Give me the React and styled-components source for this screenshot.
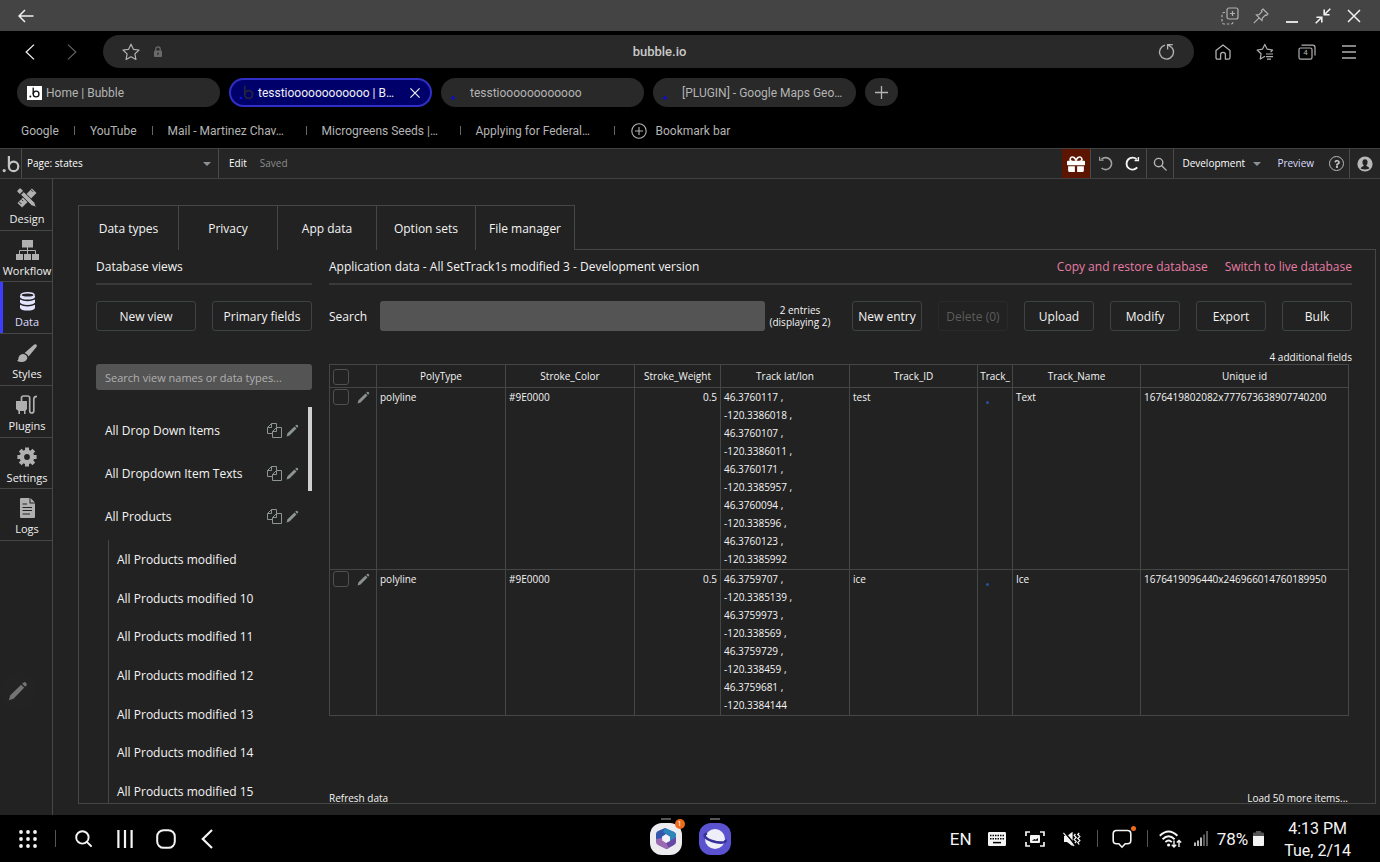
import React from "react";
import styled, { createGlobalStyle, css } from "styled-components";
import { FaGift, FaQuestion } from "react-icons/fa";

const sideItems = [
  { label: "Design", icon: "design" },
  { label: "Workflow", icon: "workflow" },
  { label: "Data", icon: "data", active: true },
  { label: "Styles", icon: "styles" },
  { label: "Plugins", icon: "plugins" },
  { label: "Settings", icon: "settings" },
  { label: "Logs", icon: "logs" },
];

const dataTabs = ["Data types", "Privacy", "App data", "Option sets", "File manager"];
const views = ["All Drop Down Items", "All Dropdown Item Texts", "All Products"];
const subViews = [
  "All Products modified",
  "All Products modified 10",
  "All Products modified 11",
  "All Products modified 12",
  "All Products modified 13",
  "All Products modified 14",
  "All Products modified 15",
];

const columns = [
  { name: "", width: 47 },
  { name: "PolyType", width: 129 },
  { name: "Stroke_Color", width: 129 },
  { name: "Stroke_Weight", width: 86 },
  { name: "Track lat/lon", width: 129 },
  { name: "Track_ID", width: 128 },
  { name: "Track_", width: 35 },
  { name: "Track_Name", width: 128 },
  { name: "Unique id", width: 208 },
];

const rows = [
  {
    points: ["46.3760117 ,", "-120.3386018 ,", "46.3760107 ,", "-120.3386011 ,", "46.3760171 ,", "-120.3385957 ,", "46.3760094 ,", "-120.338596 ,", "46.3760123 ,", "-120.3385992"],
    trackId: "test",
    trackName: "Text",
    uid: "1676419802082x777673638907740200",
  },
  {
    points: ["46.3759707 ,", "-120.3385139 ,", "46.3759973 ,", "-120.338569 ,", "46.3759729 ,", "-120.338459 ,", "46.3759681 ,", "-120.3384144"],
    trackId: "ice",
    trackName: "Ice",
    uid: "1676419096440x246966014760189950",
  },
];

const Icon = ({ size = 20, width, height, box = "0 0 24 24", stroke = 1.5, children }) => (
  <svg
    width={width || size}
    height={height || size}
    viewBox={box}
    fill="none"
    stroke="currentColor"
    strokeWidth={stroke}
    aria-hidden="true"
  >
    {children}
  </svg>
);

const BubbleMark = ({ size = 18, dot = "currentColor" }) => (
  <Icon size={size} box="0 0 18 18" stroke={2.2}>
    <circle cx="11.6" cy="11.4" r="4.7" />
    <rect x="5.8" y="1" width="2.2" height="10.5" fill="currentColor" stroke="none" />
    <circle cx="2.2" cy="15.6" r="1.6" fill={dot} stroke="none" />
  </Icon>
);

const Pencil = ({ size = 14 }) => (
  <Icon size={size} box="0 0 14 14">
    <path d="M.6 13.4 L1.6 10 L9.2 2.7 L11.3 4.8 L3.8 12.4 Z M9.9 2 L11 1 Q11.7 .5 12.3 1.1 L12.9 1.7 Q13.5 2.3 13 3 L12 4.1 Z" fill="currentColor" stroke="none" />
  </Icon>
);

const CopyIcon = () => (
  <Icon width={15} height={15} box="0 0 15 15" stroke={1}>
    <path d="M5.5 10.5 H.5 V4.5 L4.5 .5 H9.5 V4" />
    <path d="M4.5 .5 V4.5 H.5" />
    <path d="M9.5 4.5 H14.5 V14.5 H5.5 V8.5 Z" />
    <path d="M9.5 4.5 V8.5 H5.5" />
  </Icon>
);

const SideIcon = ({ name }) => {
  if (name === "workflow") {
    return (
      <Icon width={23} height={20} box="0 0 23 20" stroke={1}>
        <path d="M6 0 H17 V7.5 H6 Z M0 14 H7 V20 H0 Z M8 14 H15 V20 H8 Z M16 14 H23 V20 H16 Z" fill="currentColor" stroke="none" />
        <path d="M11.5 7 V14 M3.5 14 V10.5 H19.5 V14" />
      </Icon>
    );
  }
  if (name === "data") {
    return (
      <Icon width={15} height={19} box="0 0 15 19">
        <ellipse cx="7.5" cy="3" rx="6.6" ry="2.3" strokeWidth="1.4" />
        <path d="M0 3.4 Q7.5 8 15 3.4 V5.2 Q13.6 7.6 7.5 7.6 Q1.4 7.6 0 5.2 Z" fill="currentColor" stroke="none" />
        <path d="M0 7.4 Q3 9.2 7.5 9.2 Q12 9.2 15 7.4 V10.6 Q13.6 13 7.5 13 Q1.4 13 0 10.6 Z" fill="currentColor" stroke="none" />
        <path d="M0 12.8 Q3 14.6 7.5 14.6 Q12 14.6 15 12.8 V16 Q13.6 18.6 7.5 18.6 Q1.4 18.6 0 16 Z" fill="currentColor" stroke="none" />
      </Icon>
    );
  }
  if (name === "styles") {
    return (
      <Icon width={20} height={19} box="0 0 20 19">
        <path d="M7.6 9 L17.2 .6 Q18.6 -.2 19.6 .8 Q20.2 1.8 19.4 3 L11.6 12.4 Q10.4 9.8 7.6 9 Z" fill="currentColor" stroke="none" />
        <path d="M6.4 10 Q9.8 10.6 10.4 14 Q9.4 17.4 5.6 18 Q2.4 18.4 0 16.8 Q1.6 16.2 1.6 13.6 Q2.4 10 6.4 10 Z" fill="currentColor" stroke="none" />
      </Icon>
    );
  }
  if (name === "settings") {
    return (
      <Icon size={20} box="0 0 20 20" stroke={4}>
        <path d="M10 .4 V4 M10 16 V19.6 M.4 10 H4 M16 10 H19.6 M3.2 3.2 L5.8 5.8 M14.2 14.2 L16.8 16.8 M3.2 16.8 L5.8 14.2 M14.2 5.8 L16.8 3.2" />
        <circle cx="10" cy="10" r="5.1" strokeWidth="4.4" />
      </Icon>
    );
  }
  if (name === "design") {
    return (
      <Icon size={20} box="0 0 20 20">
        <g fill="currentColor" stroke="none">
          <path d="M14.9 .5 L19.5 5.1 L5.1 19.5 L.5 14.9 Z" />
          <path d="M3.6 .5 L6 2.8 L2.8 6 L.5 3.7 Q0 3.2 .5 2.6 L2.6 .5 Q3.1 0 3.6 .5 Z" />
        </g>
        <path d="M6.8 3.6 L17.7 14.5 L19.4 19.3 L14.6 17.7 L3.6 6.8 Z" fill="currentColor" stroke="#222222" strokeWidth="1" />
        <path d="M14 1.7 L16 3.7 M2.2 13.8 L4.4 16 M4.6 11.5 L6.2 13.1" stroke="#222222" strokeWidth="1" />
      </Icon>
    );
  }
  if (name === "plugins") {
    return (
      <Icon width={22} height={20} box="0 0 22 20" stroke={1.7}>
        <path d="M0 6 H11 V14 L9.5 16 V19 H8 V16 H4 V19 H2.4 V16 L0 14 Z" fill="currentColor" stroke="none" />
        <path d="M5.5 6 V3 Q5.5 1 7.5 1 H11.5 Q13.7 1 13.7 3 V15.5 Q13.7 18 15.7 18 Q17.8 18 17.8 15.5 V4 Q17.8 1.3 21 1.3" />
      </Icon>
    );
  }
  return (
    <Icon width={15} height={20} box="0 0 15 20">
      <path d="M1 0 H9.5 V5.5 H15 V19 Q15 20 14 20 H1 Q0 20 0 19 V1 Q0 0 1 0 Z M10.5 0 L15 4.5 H10.5 Z" fill="currentColor" stroke="none" />
      <path d="M2.5 6 H7 M2.5 9.5 H12 M2.5 12.5 H12 M2.5 16 H10" stroke="#222222" strokeWidth="1" />
    </Icon>
  );
};

const Browser = () => (
  <BrowserChrome>
    <TitleBar>
      <ChromeButton $w={31} $bright aria-label="Close app">
        <Icon size={16} box="0 0 16 16">
          <path d="M15.5 8 H1.2 M7 2 L1 8 L7 14" />
        </Icon>
      </ChromeButton>
      <Spacer />
      <ChromeButton $w={31} aria-label="Pop out">
        <Icon size={18} box="0 0 18 18" stroke={1.2}>
          <rect x="6" y="1" width="11" height="11" rx="2" />
          <path d="M11.5 4 V9 M9 6.5 H14" />
          <path d="M4 5.5 H3 Q1 5.5 1 8 V15 Q1 17 3 17 H10 Q12 17 12 15 V13.5" strokeDasharray="2.5 1.8" />
        </Icon>
      </ChromeButton>
      <ChromeButton $w={31} aria-label="Pin">
        <Icon size={16} box="0 0 16 16" stroke={1.2}>
          <path d="M10 1 L15 6 L13.4 7.6 L12.4 7 L9.4 10 L9 12.6 L3.4 7 L6 6.6 L9 3.6 L8.4 2.6 Z M5.8 10.2 L.8 15.2" />
        </Icon>
      </ChromeButton>
      <ChromeButton $w={31} $bright aria-label="Minimize">
        <Icon size={16} box="0 0 16 16" stroke={1.8}>
          <path d="M2 14 H14" />
        </Icon>
      </ChromeButton>
      <ChromeButton $w={31} $bright aria-label="Restore">
        <Icon size={16} box="0 0 16 16" stroke={1.6}>
          <path d="M15.3 .7 L9.3 6.7 M9.2 1.5 V6.8 H14.6 M.7 15.3 L6.7 9.3 M1.4 9.2 H6.8 V14.5" />
        </Icon>
      </ChromeButton>
      <ChromeButton $w={31} $bright aria-label="Close">
        <Icon size={14} box="0 0 14 14" stroke={1.5}>
          <path d="M1 1 L13 13 M13 1 L1 13" />
        </Icon>
      </ChromeButton>
    </TitleBar>

    <AddressRow>
      <ChromeButton $w={42} $bright aria-label="Back">
        <Icon width={10} height={16} box="0 0 10 16" stroke={1.3}>
          <path d="M9 .6 L1.2 8 L9 15.4" />
        </Icon>
      </ChromeButton>
      <ChromeButton $w={42} $dim aria-label="Forward">
        <Icon width={10} height={16} box="0 0 10 16" stroke={1.3}>
          <path d="M1 .6 L8.8 8 L1 15.4" />
        </Icon>
      </ChromeButton>
      <AddressPill>
        <Icon size={18} box="0 0 18 18" stroke={1.2}>
          <path d="M9 1.2 L11.4 6.3 L17 7 L12.9 10.9 L13.9 16.5 L9 13.8 L4.1 16.5 L5.1 10.9 L1 7 L6.6 6.3 Z" strokeLinejoin="round" />
        </Icon>
        <LockIcon>
          <Icon width={8} height={11} box="0 0 8 11" stroke={1.2}>
            <path d="M1.8 5 V3 Q1.8 .9 4 .9 Q6.2 .9 6.2 3 V5" />
            <rect x="0" y="4.4" width="8" height="6.6" rx="1" fill="currentColor" stroke="none" />
            <path d="M4 6.5 V9" stroke="#292929" />
          </Icon>
        </LockIcon>
        <Url>bubble.io</Url>
        <Icon size={18} box="0 0 18 18" stroke={1.3}>
          <path d="M14.6 4.2 A7 7 0 1 1 8 2.2" />
          <path d="M15.8 1.6 H10.6 V6.6 M10.8 1.8 L14.6 4.4" />
        </Icon>
      </AddressPill>
      <ChromeButton $w={42} aria-label="Home">
        <Icon size={16} box="0 0 16 16" stroke={1.3}>
          <path d="M5.6 15.2 H2.6 Q1 15.2 1 13.6 V6.4 L8 .9 L15 6.4 V13.6 Q15 15.2 13.4 15.2 H10.4 V10.6 Q10.4 8.4 8 8.4 Q5.6 8.4 5.6 10.6 Z" strokeLinejoin="round" />
        </Icon>
      </ChromeButton>
      <ChromeButton $w={42} aria-label="Bookmarks">
        <Icon size={18} box="0 0 18 18" stroke={1.2}>
          <path d="M9 13.2 L4.2 16 L5.1 10.8 L1.2 7 L6.4 6.2 L8.8 1.4 L11.2 6.2 L16.6 7 L14.6 9" strokeLinejoin="round" />
          <path d="M10 11 H17 M10 13.6 H17 M11 16.2 H15" />
        </Icon>
      </ChromeButton>
      <ChromeButton $w={42} aria-label="Tabs">
        <TabCount>
          <Icon width={18} height={16} box="0 0 18 16" stroke={1.2}>
            <rect x="1" y="4" width="13" height="11.2" rx="1.6" />
            <path d="M3.5 1.2 H14.6 Q17 1.2 17 3.4 V11.5" />
          </Icon>
          <span>4</span>
        </TabCount>
      </ChromeButton>
      <ChromeButton $w={42} aria-label="Menu">
        <Icon size={14} box="0 0 14 14" stroke={1.3}>
          <path d="M0 1 H14 M0 7 H14 M0 13 H14" />
        </Icon>
      </ChromeButton>
    </AddressRow>

    <TabRow>
      <BrowserTab>
        <Favicon>
          <BubbleMark size={11} />
        </Favicon>
        <span>Home | Bubble</span>
      </BrowserTab>
      <BrowserTab $active>
        <DarkMark>
          <BubbleMark size={15} dot="#1010d8" />
        </DarkMark>
        <span>tesstioooooooooooo | B…</span>
        <Spacer />
        <Icon size={10} box="0 0 10 10" stroke={1.2}>
          <path d="M.4 .4 L9.6 9.6 M9.6 .4 L.4 9.6" />
        </Icon>
      </BrowserTab>
      <BrowserTab>
        <LoadingDot />
        <span>tesstioooooooooooo</span>
      </BrowserTab>
      <BrowserTab>
        <LoadingDot />
        <span>[PLUGIN] - Google Maps Geo…</span>
      </BrowserTab>
      <NewTab aria-label="New tab">
        <Icon size={13} box="0 0 13 13" stroke={1.3}>
          <path d="M6.5 0 V13 M0 6.5 H13" />
        </Icon>
      </NewTab>
    </TabRow>

    <BookmarkRow>
      <Bookmark href="#">Google</Bookmark>
      <Bookmark href="#">YouTube</Bookmark>
      <Bookmark href="#" $long>Mail - Martinez Chav…</Bookmark>
      <Bookmark href="#" $long>Microgreens Seeds |…</Bookmark>
      <Bookmark href="#" $long>Applying for Federal…</Bookmark>
      <AddBookmark>
        <Icon size={16} box="0 0 16 16" stroke={1.1}>
          <circle cx="8" cy="8" r="7.2" />
          <path d="M8 4 V12 M4 8 H12" />
        </Icon>
        Bookmark bar
      </AddBookmark>
    </BookmarkRow>
  </BrowserChrome>
);

const EditorBar = () => (
  <TopBar>
    <LogoCell>
      <BubbleMark size={18} />
    </LogoCell>
    <PageCell>
      <BarSelect aria-label="Page">
        <option>Page: states</option>
      </BarSelect>
      <Caret />
    </PageCell>
    <BarText>Edit</BarText>
    <SavedText>Saved</SavedText>
    <Spacer />
    <GiftButton aria-label="Gift">
      <FaGift size={18} />
    </GiftButton>
    <HistoryCell>
      <IconButton aria-label="Undo">
        <Icon size={15} box="0 0 15 15" stroke={1.6}>
          <path d="M3.5 3.2 A6 6 0 1 1 3.5 12" />
          <path d="M1.6 .8 V4.2 H5.6" strokeWidth="1.2" />
        </Icon>
      </IconButton>
      <IconButton $bright aria-label="Redo">
        <Icon size={15} box="0 0 15 15" stroke={1.9}>
          <path d="M11.8 3.4 A6 6 0 1 0 12.2 11.4" />
          <path d="M13.4 1 V4.5 H9.6" strokeWidth="1.4" />
        </Icon>
      </IconButton>
    </HistoryCell>
    <SearchCell aria-label="Search">
      <Icon size={14} box="0 0 16 16" stroke={1.6}>
        <circle cx="6.4" cy="6.4" r="4.8" />
        <path d="M10 10 L15 15" strokeLinecap="round" />
      </Icon>
    </SearchCell>
    <DevSelect aria-label="Version">
      <option>Development</option>
    </DevSelect>
    <Caret />
    <PreviewLink href="#">Preview</PreviewLink>
    <HelpCircle aria-label="Help">
      <FaQuestion size={8} />
    </HelpCircle>
    <UserCell aria-label="Account">
      <Icon size={16} box="0 0 16 16">
        <circle cx="8" cy="8" r="7.6" fill="currentColor" stroke="none" />
        <path d="M3.6 12.4 Q4 10.6 6.6 10 V9 Q5.2 7.6 5.4 5.4 Q5.8 3.2 8 3.2 Q10.2 3.2 10.6 5.4 Q10.8 7.6 9.4 9 V10 Q12 10.6 12.4 12.4 Q8 14.4 3.6 12.4 Z" fill="#222222" stroke="none" />
      </Icon>
    </UserCell>
  </TopBar>
);

const ViewsPane = () => (
  <ViewsColumn>
    <Heading>Database views</Heading>
    <ViewButtons>
      <OutlineButton>New view</OutlineButton>
      <OutlineButton>Primary fields</OutlineButton>
    </ViewButtons>
    <ViewSearch aria-label="Search views" placeholder="Search view names or data types..." />
    <ViewList>
      <ScrollThumb />
      {views.map((view) => (
        <ViewRow key={view}>
          <span>{view}</span>
          <Spacer />
          <CopyIcon />
          <Pencil size={13} />
        </ViewRow>
      ))}
      <SubList>
        {subViews.map((view) => (
          <SubRow key={view}>{view}</SubRow>
        ))}
      </SubList>
    </ViewList>
  </ViewsColumn>
);

const DataPane = () => (
  <DataColumn>
    <Heading>
      <span>Application data - All SetTrack1s modified 3 - Development version</span>
      <Spacer />
      <PinkLink href="#">Copy and restore database</PinkLink>
      <PinkLink href="#">Switch to live database</PinkLink>
    </Heading>
    <Controls>
      <SearchLabel htmlFor="search">Search</SearchLabel>
      <SearchInput id="search" />
      <Entries>
        2 entries
        <br />
        (displaying 2)
      </Entries>
      <Actions>
        <OutlineButton>New entry</OutlineButton>
        <OutlineButton disabled>Delete (0)</OutlineButton>
        <OutlineButton>Upload</OutlineButton>
        <OutlineButton>Modify</OutlineButton>
        <OutlineButton>Export</OutlineButton>
        <OutlineButton>Bulk</OutlineButton>
      </Actions>
    </Controls>
    <Additional>4 additional fields</Additional>
    <Table>
      <colgroup>
        {columns.map((col) => (
          <Col key={col.name} $w={col.width} />
        ))}
      </colgroup>
      <thead>
        <tr>
          {columns.map((col) =>
            col.name ? (
              <Th key={col.name}>{col.name}</Th>
            ) : (
              <Th key="check">
                <RowTools>
                  <CheckBox type="checkbox" aria-label="Select all" />
                </RowTools>
              </Th>
            )
          )}
        </tr>
      </thead>
      <tbody>
        {rows.map((row) => (
          <tr key={row.uid}>
            <Td>
              <RowTools>
                <CheckBox type="checkbox" aria-label={`Select ${row.trackName}`} />
                <Pencil size={13} />
              </RowTools>
            </Td>
            <Td>polyline</Td>
            <Td>#9E0000</Td>
            <Td $right>0.5</Td>
            <Td>
              {row.points.map((point) => (
                <Point key={point}>{point}</Point>
              ))}
            </Td>
            <Td>{row.trackId}</Td>
            <Td>
              <BlueDot />
            </Td>
            <Td>{row.trackName}</Td>
            <Td>{row.uid}</Td>
          </tr>
        ))}
      </tbody>
    </Table>
    <PaneFooter>
      <FooterButton>Refresh data</FooterButton>
      <FooterButton>Load 50 more items...</FooterButton>
    </PaneFooter>
  </DataColumn>
);

const Taskbar = () => (
  <TaskbarWrap>
    <TaskGroup>
      <TaskButton $w={55} aria-label="Apps">
        <Icon size={18} box="0 0 18 18">
          <g fill="currentColor" stroke="none">
            {[2, 9, 16].map((y) => [2, 9, 16].map((x) => <circle key={`${x}-${y}`} cx={x} cy={y} r="1.9" />))}
          </g>
        </Icon>
      </TaskButton>
      <Divider />
      <TaskButton $w={55} aria-label="Search">
        <Icon size={17} box="0 0 17 17" stroke={1.9}>
          <circle cx="7.4" cy="7.4" r="6.2" />
          <path d="M11.8 11.8 L16 16" strokeLinecap="round" />
        </Icon>
      </TaskButton>
      <TaskButton $w={27} aria-label="Recents">
        <Icon width={16} height={18} box="0 0 16 18" stroke={2.2}>
          <path d="M1.4 0 V18 M8 0 V18 M14.6 0 V18" />
        </Icon>
      </TaskButton>
      <TaskButton $w={55} aria-label="Home">
        <Icon size={20} box="0 0 20 20" stroke={2}>
          <rect x="1.2" y="1.2" width="17.6" height="17.6" rx="6.4" />
        </Icon>
      </TaskButton>
      <TaskButton $w={27} aria-label="Back">
        <Icon width={12} height={20} box="0 0 12 20" stroke={2.2}>
          <path d="M11 1 L1.8 10 L11 19" />
        </Icon>
      </TaskButton>
    </TaskGroup>

    <DockGroup>
      <DockApp aria-label="Microsoft 365">
        <svg width="20" height="21" viewBox="0 0 20 21" aria-hidden="true">
          <path d="M9 0 L18 4 Q20 5 20 7 V12 L14 9 L10 6 L6 9 V17 L1 15 Q0 14 0 12 V6 Q0 4 2 3 Z" fill="#3257ad" />
          <path d="M9 0 L18 4 Q20 5 20 7 V13 L14 13 V8 L7 4 Z" fill="#2d86ba" />
          <path d="M20 9 V14 Q20 16 18 17 L11 21 L3 17 L6 14 L10 15 L14 13 Z" fill="#6848a4" />
          <path d="M0 11 L6 10 L10 15 L13 20 L10 21 L2 17 Q0 16 0 14 Z" fill="#9b68b2" />
          <path d="M10 6.5 L13.8 8.6 V12.6 L10 14.8 L6.2 12.6 V8.6 Z" fill="#f1f1f7" />
        </svg>
        <Badge>1</Badge>
      </DockApp>
      <DockApp $purple aria-label="Internet">
        <svg width="24" height="22" viewBox="0 0 24 22" aria-hidden="true">
          <circle cx="12" cy="11" r="10" fill="#eeeef8" />
          <path d="M4 5.5 C-.5 6.5 1.5 10.5 9 13 C17 15.6 23.5 15 22.5 11.8" fill="none" stroke="#35309a" strokeWidth="2.6" />
        </svg>
      </DockApp>
    </DockGroup>

    <StatusGroup>
      <Status>EN</Status>
      <StatusIcon $w={50}>
        <Icon width={18} height={14} box="0 0 18 14">
          <rect width="18" height="14" rx="1.2" fill="currentColor" stroke="none" />
          <path d="M2 3.5 H16 M2 6.8 H16" stroke="#000" strokeWidth="1.5" strokeDasharray="1.5 1" />
          <path d="M5 10.6 H13" stroke="#000" />
        </Icon>
      </StatusIcon>
      <StatusIcon $w={26}>
        <Icon width={20} height={16} box="0 0 20 16" stroke={1.7}>
          <path d="M1 5 V1 H5 M15 1 H19 V5 M19 11 V15 H15 M5 15 H1 V11" />
          <path d="M5 5 Q5 4 6 4 H14 Q15 4 15 5 V11 Q15 12 14 12 H6 Q5 12 5 11 Z M6.8 9.8 H13 V7 L10.8 8.8 L9.4 8 Z" fill="currentColor" fillRule="evenodd" stroke="none" />
        </Icon>
      </StatusIcon>
      <StatusIcon $w={49}>
        <Icon width={18} height={16} box="0 0 18 16" stroke={1.3}>
          <path d="M1 5 H4 L9.6 .8 V15.2 L4 11 H1 Z" fill="currentColor" stroke="none" />
          <path d="M1.4 1.2 L12.4 14" stroke="#000" strokeWidth="1.6" />
          <path d="M.4 1.8 L11 14.8" />
          <path d="M12.4 3 L11.2 4.5 L13.2 6.5 L11.2 8.5 L13.2 10.5 L12 12 M16.2 2 L14.8 3.5 L16.8 5.5 L14.8 7.5 L16.8 9.5 L14.8 11.5 L16.2 13.5" />
        </Icon>
      </StatusIcon>
      <Divider />
      <StatusIcon $w={49}>
        <NoticeDot />
        <Icon width={20} height={20} box="0 0 20 20" stroke={1.6}>
          <path d="M4.5 1.5 H15.5 Q18.8 1.5 18.8 4.8 V11.5 Q18.8 14.8 15.5 14.8 H13.2 L10 18.2 L6.8 14.8 H4.5 Q1.2 14.8 1.2 11.5 V4.8 Q1.2 1.5 4.5 1.5 Z" />
        </Icon>
      </StatusIcon>
      <Divider />
      <StatusIcon $w={46}>
        <Icon width={23} height={18} box="0 0 23 18" stroke={1.9}>
          <path d="M.8 5.8 Q9.6 -2.6 18.4 5.8 M3.6 9.2 Q9.6 3.4 15.6 9.2 M6.4 12.2 Q9.6 9 12.8 12.2" />
          <circle cx="9.6" cy="15" r="1.6" fill="currentColor" stroke="none" />
          <path d="M15 10.5 V16.8 M12.8 14.8 L15 17 L17.2 14.8 M20 17 V10.5 M17.8 12.6 L20 10.4 L22.2 12.6" strokeWidth="1.4" />
        </Icon>
      </StatusIcon>
      <StatusIcon $w={14}>
        <Icon width={14} height={15} box="0 0 14 15" stroke={1.5}>
          <path d="M1 11.5 V15 M4 9.5 V15 M7 6.5 V15" />
          <path d="M10 3.5 V15 M13 0 V15" stroke="#777777" />
        </Icon>
      </StatusIcon>
      <Battery>
        78%
        <Icon width={11} height={15} box="0 0 11 15">
          <path d="M3 0 H8 V1.6 H10 Q11 1.6 11 2.6 V6 H0 V2.6 Q0 1.6 1 1.6 H3 Z" fill="#555555" stroke="none" />
          <path d="M0 5 H11 V14 Q11 15 10 15 H1 Q0 15 0 14 Z" fill="currentColor" stroke="none" />
        </Icon>
      </Battery>
      <Clock>
        4:13 PM
        <br />
        Tue, 2/14
      </Clock>
    </StatusGroup>
  </TaskbarWrap>
);

const App = () => (
  <Screen>
    <GlobalStyle />
    <Browser />
    <EditorBar />
    <Workspace>
      <Sidebar>
        <SideList>
          {sideItems.map((item) => (
            <SideButton key={item.label} $active={item.active}>
              <SideArt $active={item.active}>
                <SideIcon name={item.icon} />
              </SideArt>
              <span>{item.label}</span>
            </SideButton>
          ))}
        </SideList>
        <PenBubble aria-label="Pen">
          <Pencil size={20} />
        </PenBubble>
      </Sidebar>
      <Main>
        <DataTabs>
          {dataTabs.map((tab) => (
            <DataTab key={tab}>{tab}</DataTab>
          ))}
          <TabRest />
        </DataTabs>
        <Panel>
          <ViewsPane />
          <DataPane />
        </Panel>
      </Main>
    </Workspace>
    <Taskbar />
  </Screen>
);

const line = "#444746";

const GlobalStyle = createGlobalStyle`
  * {
    box-sizing: border-box;
  }

  body {
    margin: 0;
    background: #000;
  }

  button {
    padding: 0;
    border: none;
    background: none;
    color: inherit;
    font: inherit;
    cursor: pointer;
  }

  svg {
    flex: none;
    display: block;
  }
`;

const Screen = styled.div`
  height: 100vh;
  display: flex;
  flex-direction: column;
  overflow: hidden;
  background: #222222;
  color: #f4f4f4;
  font-family: "Open Sans", "Noto Sans", sans-serif;
  font-size: 12px;
`;

const Spacer = styled.div`
  flex: 1;
`;

const BrowserChrome = styled.header`
  flex: none;
  background: #000;
  color: #b4b4b4;
  font-family: Roboto, sans-serif;
`;

const TitleBar = styled.div`
  display: flex;
  height: 31px;
  padding: 0 11px 0 10px;
  background: #444444;
`;

const ChromeButton = styled.button`
  flex: none;
  display: flex;
  align-items: center;
  justify-content: center;
  width: ${(props) => props.$w}px;
  color: ${(props) => (props.$bright ? "#f0f0f0" : props.$dim ? "#5c5c5c" : "#b0b0b0")};
`;

const AddressRow = styled.div`
  display: flex;
  height: 41px;
  padding: 0 10px 0 9px;
`;

const AddressPill = styled.div`
  flex: 1;
  display: flex;
  align-items: center;
  height: 33px;
  margin: 4px 8px 4px 10px;
  padding: 0 19px;
  border-radius: 17px;
  background: #292929;
`;

const LockIcon = styled.span`
  margin-left: 14px;
  color: #6a6a6a;
`;

const Url = styled.span`
  flex: 1;
  text-align: center;
  font-size: 13px;
  font-weight: 500;
  color: #c8c8c8;
`;

const TabCount = styled.span`
  display: grid;
  place-items: center;
  font-size: 8px;
  line-height: 16px;

  & > * {
    grid-area: 1 / 1;
  }

  & > span {
    padding: 3px 3px 0 0;
  }
`;

const TabRow = styled.div`
  display: flex;
  gap: 9px;
  padding: 6px 17px;
`;

const BrowserTab = styled.div`
  display: flex;
  align-items: center;
  gap: 4px;
  width: 203px;
  height: 29px;
  padding: 0 10px;
  border-radius: 15px;
  background: #292929;
  white-space: nowrap;

  ${(props) =>
    props.$active &&
    css`
      border: 2px solid #2f2fc8;
      background: #00006a;
      color: #f0f0f6;
      padding: 0 10px 0 8px;
    `}
`;

const Favicon = styled.span`
  display: grid;
  place-items: center;
  width: 15px;
  height: 14px;
  background: #fff;
  color: #111;
`;

const DarkMark = styled.span`
  color: #23233c;
`;

const LoadingDot = styled.span`
  width: 15px;
  height: 14px;
  background: radial-gradient(circle at 2px 12px, #1212b4 2px, transparent 2px);
`;

const NewTab = styled.button`
  display: grid;
  place-items: center;
  width: 33px;
  height: 28px;
  border-radius: 14px;
  background: #292929;
`;

const BookmarkRow = styled.nav`
  display: flex;
  align-items: center;
  height: 35px;
  padding: 0 6px;
`;

const Bookmark = styled.a`
  display: flex;
  align-items: center;
  padding: 0 0 0 15px;
  color: inherit;
  text-decoration: none;
  white-space: nowrap;
  ${(props) => props.$long && "width: 154px;"}

  &::after {
    content: "";
    width: 1px;
    height: 9px;
    margin-left: ${(props) => (props.$long ? "auto" : "15px")};
    background: #666;
  }
`;

const AddBookmark = styled.button`
  display: flex;
  align-items: center;
  gap: 9px;
  margin-left: 16px;
`;

const TopBar = styled.div`
  flex: none;
  display: flex;
  align-items: center;
  height: 31px;
  border-top: 1px solid #414141;
  border-bottom: 1px solid #414141;
  background: #252525;
  font-size: 10px;

  & > * {
    flex: none;
  }

  & > ${Spacer} {
    flex: 1;
  }
`;

const barCell = css`
  display: flex;
  align-items: center;
  align-self: stretch;
`;

const LogoCell = styled.div`
  ${barCell}
  justify-content: center;
  width: 22px;
  border-right: 1px solid #4a4a4a;
  color: #c4c4c4;
`;

const PageCell = styled.div`
  ${barCell}
  width: 197px;
  padding: 0 7px 0 5px;
  border-right: 1px solid #4a4a4a;
`;

const BarSelect = styled.select`
  flex: 1;
  padding: 0 0 2px;
  border: none;
  background: transparent;
  color: #fff;
  font: inherit;
  appearance: none;
`;

const Caret = styled.span`
  border: 4px solid transparent;
  border-top-color: #8b9399;
  border-bottom: none;
`;

const BarText = styled.button`
  margin-left: 10px;
  padding-bottom: 2px;
  color: #fff;
`;

const SavedText = styled.span`
  margin-left: 13px;
  padding-bottom: 2px;
  color: #8c8c8c;
`;

const GiftButton = styled.button`
  ${barCell}
  justify-content: center;
  width: 28px;
  background: #5c1500;
  color: #fff;
`;

const HistoryCell = styled.div`
  ${barCell}
  width: 57px;
  border-left: 1px solid #4a4a4a;
  border-right: 1px solid #4a4a4a;
`;

const IconButton = styled.button`
  display: grid;
  place-items: center;
  width: 28px;
  color: ${(props) => (props.$bright ? "#f4f4f4" : "#a0a0a0")};
`;

const SearchCell = styled.button`
  ${barCell}
  justify-content: center;
  width: 27px;
  border-right: 1px solid #4a4a4a;
  color: #b4b4b4;
`;

const DevSelect = styled(BarSelect)`
  && {
    flex: none;
    width: 71px;
    margin-left: 8px;
  }
`;

const PreviewLink = styled.a`
  margin: 0 15px 0 16px;
  padding-bottom: 2px;
  color: #dcdcff;
  text-decoration: none;
`;

const HelpCircle = styled.button`
  display: grid;
  place-items: center;
  width: 15px;
  height: 15px;
  margin-right: 5px;
  border: 1px solid #b8b8b8;
  border-radius: 50%;
  color: #c4c4c4;
`;

const UserCell = styled.button`
  ${barCell}
  justify-content: center;
  width: 31px;
  border-left: 1px solid #4a4a4a;
  color: #b8b8b8;
`;

const Workspace = styled.div`
  flex: 1;
  min-height: 0;
  display: flex;
`;

const Sidebar = styled.nav`
  flex: none;
  display: flex;
  flex-direction: column;
  width: 53px;
  border-right: 1px solid ${line};
`;

const SideList = styled.div`
  display: grid;
  grid-auto-rows: 1fr;
  height: 362px;
`;

const SideButton = styled.button`
  display: flex;
  flex-direction: column;
  align-items: center;
  padding: 7px 0 0 2px;
  border-bottom: 1px solid ${line};
  color: ${(props) => (props.$active ? "#dcdcff" : "#f0f0f0")};
  font-size: 11px;
  line-height: 18px;
  ${(props) => props.$active && "box-shadow: inset 3px 0 #3d3dff;"}
`;

const SideArt = styled.span`
  display: grid;
  place-items: center;
  height: 24px;
  color: ${(props) => (props.$active ? "#e4e4ff" : "#b0b0b0")};
`;

const PenBubble = styled.button`
  display: grid;
  place-items: center;
  width: 36px;
  height: 38px;
  margin-top: 131px;
  border-radius: 50%;
  background: #232323;
  color: #747474;
`;

const Main = styled.main`
  flex: 1;
  min-width: 0;
  display: flex;
  flex-direction: column;
  padding: 26px 4px 11px 25px;
`;

const DataTabs = styled.div`
  display: flex;
  height: 45px;
`;

const DataTab = styled.button`
  width: 99px;
  border: 1px solid ${line};
  border-width: 1px 0 0 1px;
  white-space: nowrap;

  &:first-child {
    width: 100px;
  }
`;

const TabRest = styled.div`
  flex: 1;
  border-left: 1px solid ${line};
  border-bottom: 1px solid ${line};
`;

const Panel = styled.section`
  flex: 1;
  min-height: 0;
  display: flex;
  gap: 17px;
  padding: 0 23px 0 17px;
  border: 1px solid ${line};
  border-top: none;
`;

const ViewsColumn = styled.div`
  flex: none;
  display: flex;
  flex-direction: column;
  width: 216px;
`;

const DataColumn = styled.div`
  flex: 1;
  min-width: 0;
  display: flex;
  flex-direction: column;
`;

const Heading = styled.div`
  flex: none;
  display: flex;
  align-items: center;
  gap: 17px;
  height: 35px;
  border-bottom: 2px solid #393939;
`;

const PinkLink = styled.a`
  color: #e87da6;
  text-decoration: none;
`;

const OutlineButton = styled.button`
  height: 30px;
  border: 1px solid #3c4345;
  border-radius: 3px;
  white-space: nowrap;

  &:disabled {
    border-color: #2a2a2a;
    color: #5c5c5c;
  }
`;

const ViewButtons = styled.div`
  display: grid;
  grid-template-columns: 1fr 1fr;
  gap: 16px;
  margin-top: 16px;
`;

const ViewSearch = styled.input`
  width: 100%;
  height: 26px;
  margin-top: 33px;
  padding: 0 9px;
  border: none;
  border-radius: 3px;
  background: #545454;
  color: #fff;
  font: inherit;
  font-size: 11px;

  &::placeholder {
    color: #b0b0b0;
  }
`;

const ViewList = styled.div`
  flex: 1;
  min-height: 0;
  position: relative;
  margin-top: 17px;
  overflow: hidden;
`;

const ScrollThumb = styled.div`
  position: absolute;
  top: 0;
  right: 0;
  width: 4px;
  height: 84px;
  background: #d0d0d0;
`;

const ViewRow = styled.div`
  display: flex;
  align-items: center;
  gap: 4px;
  height: 43px;
  padding: 3px 13px 0 9px;

  & > svg {
    color: #8d9494;
  }
`;

const SubList = styled.div`
  display: grid;
  grid-auto-rows: 1fr;
  align-items: center;
  height: 271px;
  margin: 4px 0 0 12px;
  border-left: 1px solid ${line};
`;

const SubRow = styled.div`
  padding-left: 8px;
`;

const Controls = styled.div`
  display: flex;
  align-items: center;
  margin-top: 16px;
`;

const SearchLabel = styled.label`
  width: 51px;
`;

const SearchInput = styled.input`
  flex: 1;
  min-width: 0;
  height: 30px;
  border: none;
  border-radius: 3px;
  background: #545454;
  color: #fff;
`;

const Entries = styled.div`
  width: 70px;
  text-align: center;
  font-size: 10px;
  line-height: 12px;
`;

const Actions = styled.div`
  display: grid;
  grid-template-columns: repeat(6, 70px);
  gap: 16px;
  margin-left: 17px;
`;

const Additional = styled.div`
  margin-top: 20px;
  text-align: right;
  font-size: 10px;
  line-height: 13px;
`;

const Table = styled.table`
  width: calc(100% - 4px);
  table-layout: fixed;
  border-collapse: collapse;
  font-size: 10px;
  line-height: 18px;
`;

const Col = styled.col`
  width: ${(props) => props.$w}px;
`;

const Th = styled.th`
  height: 23px;
  padding: 0;
  border: 1px solid ${line};
  font-weight: 400;
  text-align: center;
  overflow: hidden;
`;

const Td = styled.td`
  padding: 0 3px 1px;
  border: 1px solid ${line};
  text-align: ${(props) => (props.$right ? "right" : "left")};
  vertical-align: top;

  &:first-child {
    padding: 0;
  }
`;

const RowTools = styled.div`
  display: flex;
  align-items: center;
  gap: 8px;
  padding: 1px 0 0 3px;
  color: #8a8f8f;
`;

const CheckBox = styled.input`
  width: 16px;
  height: 16px;
  margin: 0;
  border: 1px solid #505050;
  border-radius: 3px;
  appearance: none;
`;

const Point = styled.div`
  white-space: nowrap;
`;

const BlueDot = styled.div`
  width: 3px;
  height: 3px;
  margin: 13px 0 0 5px;
  border-radius: 50%;
  background: #2850a0;
`;

const PaneFooter = styled.div`
  display: flex;
  justify-content: space-between;
  margin-top: auto;
  padding-right: 4px;
`;

const FooterButton = styled.button`
  font-size: 10px;
  line-height: 10px;
`;

const TaskbarWrap = styled.footer`
  flex: none;
  display: grid;
  grid-template-columns: 1fr auto 1fr;
  height: 47px;
  background: #000;
  color: #f4f4f4;
  font-family: Roboto, sans-serif;
  font-size: 17px;
`;

const TaskGroup = styled.div`
  display: flex;
  align-items: center;
`;

const TaskButton = styled.button`
  display: grid;
  place-items: center;
  width: ${(props) => props.$w}px;
  height: 40px;
`;

const Divider = styled.span`
  width: 1px;
  height: 17px;
  background: #555;
`;

const DockGroup = styled.div`
  display: flex;
  align-items: center;
  gap: 17px;
`;

const DockApp = styled.button`
  position: relative;
  display: grid;
  place-items: center;
  width: 32px;
  height: 32px;
  border-radius: 12px;
  background: ${(props) => (props.$purple ? "#5b52d0" : "#ececf0")};

  &::before {
    content: "";
    position: absolute;
    top: -5px;
    left: 11px;
    width: 10px;
    height: 2px;
    background: #555;
  }
`;

const Badge = styled.span`
  position: absolute;
  top: -4px;
  right: -3px;
  width: 10px;
  height: 10px;
  border-radius: 50%;
  background: #f06a1c;
  color: #fff;
  font-size: 7px;
  line-height: 10px;
`;

const StatusGroup = styled.div`
  display: flex;
  align-items: center;
  justify-content: flex-end;
  padding-right: 29px;
`;

const Status = styled.span`
  font-size: 17px;
`;

const StatusIcon = styled.span`
  position: relative;
  display: grid;
  place-items: center;
  width: ${(props) => props.$w}px;
`;

const NoticeDot = styled.span`
  position: absolute;
  top: -3px;
  right: 11px;
  width: 5px;
  height: 5px;
  border-radius: 50%;
  background: #f06a1c;
`;

const Battery = styled.span`
  display: flex;
  align-items: center;
  gap: 5px;
  margin-left: 9px;
`;

const Clock = styled.time`
  margin-left: 20px;
  padding-top: 2px;
  text-align: center;
  font-size: 16px;
  line-height: 22px;
`;

export default App;
